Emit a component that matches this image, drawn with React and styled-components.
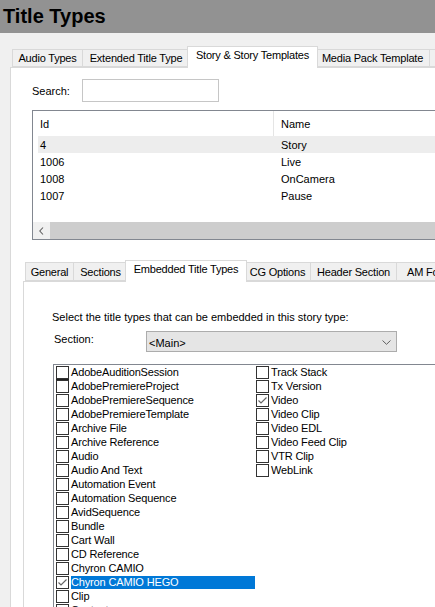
import React from 'react';
import styled, { createGlobalStyle } from 'styled-components';

const Global = createGlobalStyle`
  html, body { margin: 0; padding: 0; background: #f0f0f0; }
  body { font-family: "Liberation Sans", Arial, sans-serif; font-size: 11px; color: #000; }
  * { box-sizing: border-box; }
`;

const Page = styled.div`
  width: 435px;
  height: 607px;
  overflow: hidden;
  background: #f0f0f0;
  display: flex;
  flex-direction: column;
`;

const Header = styled.header`
  height: 33px;
  flex-shrink: 0;
  background: #929292;
  display: flex;
  align-items: center;
  padding: 0 0 1px 3px;
`;

const Title = styled.h1`
  margin: 0;
  font: bold 20px "Liberation Sans", Arial, sans-serif;
  color: #000;
`;

const Body = styled.div`
  padding: 13px 0 0 10px;
  display: flex;
  flex-direction: column;
  width: 700px;
`;

const TabStrip = styled.div`
  display: flex;
  align-items: flex-end;
  height: ${p => p.$h}px;
  padding-left: 2px;
`;

const Tab = styled.div`
  flex-shrink: 0;
  width: ${p => p.$w}px;
  height: ${p => (p.$active ? p.$h + 1 : p.$uh)}px;
  margin-left: ${p => (p.$active ? -3 : -1)}px;
  margin-right: ${p => (p.$active ? -2 : 0)}px;
  margin-bottom: ${p => (p.$active ? -1 : 0)}px;
  position: relative;
  z-index: ${p => (p.$active ? 2 : 1)};
  background: ${p => (p.$active ? '#ffffff' : '#f0f0f0')};
  border: 1px solid #d9d9d9;
  border-bottom: ${p => (p.$active ? 'none' : '1px solid #d9d9d9')};
  display: flex;
  align-items: ${p => (p.$active ? 'flex-start' : 'center')};
  padding-top: ${p => (p.$active ? 2 : 0)}px;
  justify-content: center;
  white-space: nowrap;
  overflow: hidden;
  font-size: 11px;
  letter-spacing: -0.2px;
  &:first-child { margin-left: 0; }
`;

const Panel = styled.div`
  background: #ffffff;
  border: 1px solid #d9d9d9;
  border-right: none;
  display: flex;
  flex-direction: column;
  padding: ${p => p.$pad};
`;

const SearchRow = styled.div`
  display: flex;
  align-items: center;
  padding-left: 21px;
`;

const Label = styled.span`
  width: ${p => p.$w}px;
  flex-shrink: 0;
  font-size: 11px;
`;

const SearchInput = styled.div`
  width: 137px;
  height: 23px;
  border: 1px solid #c6c6c6;
  background: #fff;
`;

const ListView = styled.div`
  margin: 8px 0 0 21px;
  height: 130px;
  border: 1px solid #828790;
  border-right: none;
  display: flex;
  flex-direction: column;
  background: #fff;
`;

const ListHeader = styled.div`
  height: 25px;
  display: grid;
  grid-template-columns: 241px 1fr;
  flex-shrink: 0;
`;

const HeadCell = styled.div`
  padding-left: 7px;
  display: flex;
  align-items: center;
  border-right: ${p => (p.$sep ? '1px solid #e5e5e5' : 'none')};
`;

const Rows = styled.div`
  flex: 1;
  display: flex;
  flex-direction: column;
`;

const Row = styled.div`
  height: 17px;
  margin-left: 5px;
  display: grid;
  grid-template-columns: 243px 1fr;
  align-items: center;
  background: ${p => (p.$hover ? '#ededed' : 'transparent')};
`;

const Cell = styled.div`
  padding-left: ${p => p.$pl}px;
`;

const HScroll = styled.div`
  height: 17px;
  flex-shrink: 0;
  display: flex;
  background: #cdcdcd;
`;

const ScrollBtn = styled.div`
  width: 17px;
  background: #f0f0f0;
  display: flex;
  align-items: center;
  justify-content: center;
`;

const Inner = styled.div`
  margin: 20px 0 0 12px;
  display: flex;
  flex-direction: column;
`;

const Description = styled.div`
  line-height: 13px;
`;

const SectionRow = styled.div`
  display: flex;
  align-items: flex-start;
  margin-top: 7px;
  padding-left: 2px;
`;

const SectionLabel = styled.span`
  width: 92px;
  padding-top: 2px;
  font-size: 11px;
`;

const Dropdown = styled.div`
  width: 251px;
  height: 21px;
  background: #e5e5e5;
  border: 1px solid #acacac;
  display: flex;
  align-items: center;
  justify-content: space-between;
  padding: 2px 5px 0 2px;
`;

const CheckList = styled.div`
  margin: 12px 0 0 1px;
  border-top: 1px solid #828790;
  border-left: 1px solid #828790;
  padding: 0 0 0 2px;
  display: flex;
  height: 400px;
`;

const Column = styled.div`
  width: 200px;
  display: flex;
  flex-direction: column;
  flex-shrink: 0;
`;

const Item = styled.div`
  height: 14px;
  display: flex;
  align-items: flex-start;
  gap: 2px;
`;

const Box = styled.div`
  width: 13px;
  height: 13px;
  margin-top: 1px;
  border: 1px solid #333;
  background: #fff;
  display: flex;
  align-items: center;
  justify-content: center;
  flex-shrink: 0;
  box-shadow: ${p => (p.$focus ? '0 1px 0 #222' : 'none')};
`;

const ItemText = styled.span`
  width: 184px;
  height: 13px;
  line-height: 13px;
  margin-top: 1px;
  white-space: nowrap;
  background: ${p => (p.$sel ? '#0078d7' : 'transparent')};
  color: ${p => (p.$sel ? '#fff' : '#000')};
  font-size: 11px;
  letter-spacing: -0.15px;
`;

const Check = () => (
  <svg width="11" height="11" viewBox="0 0 11 11">
    <polyline points="1.5,5.5 4,8 9.5,2.5" fill="none" stroke="#666" strokeWidth="1.2" />
  </svg>
);

const CheckItem = ({ label, checked, selected, focus }) => (
  <Item>
    <Box $focus={focus}>{checked && <Check />}</Box>
    <ItemText $sel={selected}>{label}</ItemText>
  </Item>
);

const outerTabs = [
  { t: 'Audio Types', w: 71 },
  { t: 'Extended Title Type', w: 108 },
  { t: 'Story & Story Templates', w: 131, a: true },
  { t: 'Media Pack Template', w: 115 },
  { t: 'Source Types', w: 80 },
];

const innerTabs = [
  { t: 'General', w: 49 },
  { t: 'Sections', w: 55 },
  { t: 'Embedded Title Types', w: 122, a: true },
  { t: 'CG Options', w: 67 },
  { t: 'Header Section', w: 87 },
  { t: 'AM Formats', w: 80 },
];

const rows = [
  ['4', 'Story', true],
  ['1006', 'Live'],
  ['1008', 'OnCamera'],
  ['1007', 'Pause'],
];

const col1 = [
  'AdobeAuditionSession', 'AdobePremiereProject', 'AdobePremiereSequence', 'AdobePremiereTemplate',
  'Archive File', 'Archive Reference', 'Audio', 'Audio And Text', 'Automation Event',
  'Automation Sequence', 'AvidSequence', 'Bundle', 'Cart Wall', 'CD Reference', 'Chyron CAMIO',
  'Chyron CAMIO HEGO', 'Clip', 'Content', 'Custom',
];

const col2 = ['Track Stack', 'Tx Version', 'Video', 'Video Clip', 'Video EDL', 'Video Feed Clip', 'VTR Clip', 'WebLink'];

export default function App() {
  return (
    <Page>
      <Global />
      <Header>
        <Title>Title Types</Title>
      </Header>
      <Body>
        <TabStrip $h={21}>
          {outerTabs.map(x => (
            <Tab key={x.t} $w={x.w} $active={x.a} $h={21} $uh={18}>{x.t}</Tab>
          ))}
        </TabStrip>
        <Panel $pad="11px 0 0 0">
          <SearchRow>
            <Label $w={50}>Search:</Label>
            <SearchInput />
          </SearchRow>
          <ListView>
            <ListHeader>
              <HeadCell $sep>Id</HeadCell>
              <HeadCell>Name</HeadCell>
            </ListHeader>
            <Rows>
              {rows.map(([id, name, hover]) => (
                <Row key={id} $hover={hover}>
                  <Cell $pl={2}>{id}</Cell>
                  <Cell $pl={0}>{name}</Cell>
                </Row>
              ))}
            </Rows>
            <HScroll>
              <ScrollBtn>
                <svg width="5" height="8" viewBox="0 0 5 8">
                  <polyline points="4,0.5 0.8,4 4,7.5" fill="none" stroke="#606060" strokeWidth="1.1" />
                </svg>
              </ScrollBtn>
            </HScroll>
          </ListView>
          <Inner>
            <TabStrip $h={21}>
              {innerTabs.map(x => (
                <Tab key={x.t} $w={x.w} $active={x.a} $h={21} $uh={19}>{x.t}</Tab>
              ))}
            </TabStrip>
            <Panel $pad="29px 0 0 28px">
              <Description>Select the title types that can be embedded in this story type:</Description>
              <SectionRow>
                <SectionLabel>Section:</SectionLabel>
                <Dropdown>
                  <span>&lt;Main&gt;</span>
                  <svg width="9" height="5" viewBox="0 0 9 5">
                    <polyline points="0.5,0.5 4.5,4.3 8.5,0.5" fill="none" stroke="#606060" strokeWidth="1" />
                  </svg>
                </Dropdown>
              </SectionRow>
              <CheckList>
                <Column>
                  {col1.map((l, i) => (
                    <CheckItem
                      key={l}
                      label={l}
                      focus={i === 0}
                      checked={l === 'Chyron CAMIO HEGO'}
                      selected={l === 'Chyron CAMIO HEGO'}
                    />
                  ))}
                </Column>
                <Column>
                  {col2.map(l => (
                    <CheckItem key={l} label={l} checked={l === 'Video'} />
                  ))}
                </Column>
              </CheckList>
            </Panel>
          </Inner>
        </Panel>
      </Body>
    </Page>
  );
}
